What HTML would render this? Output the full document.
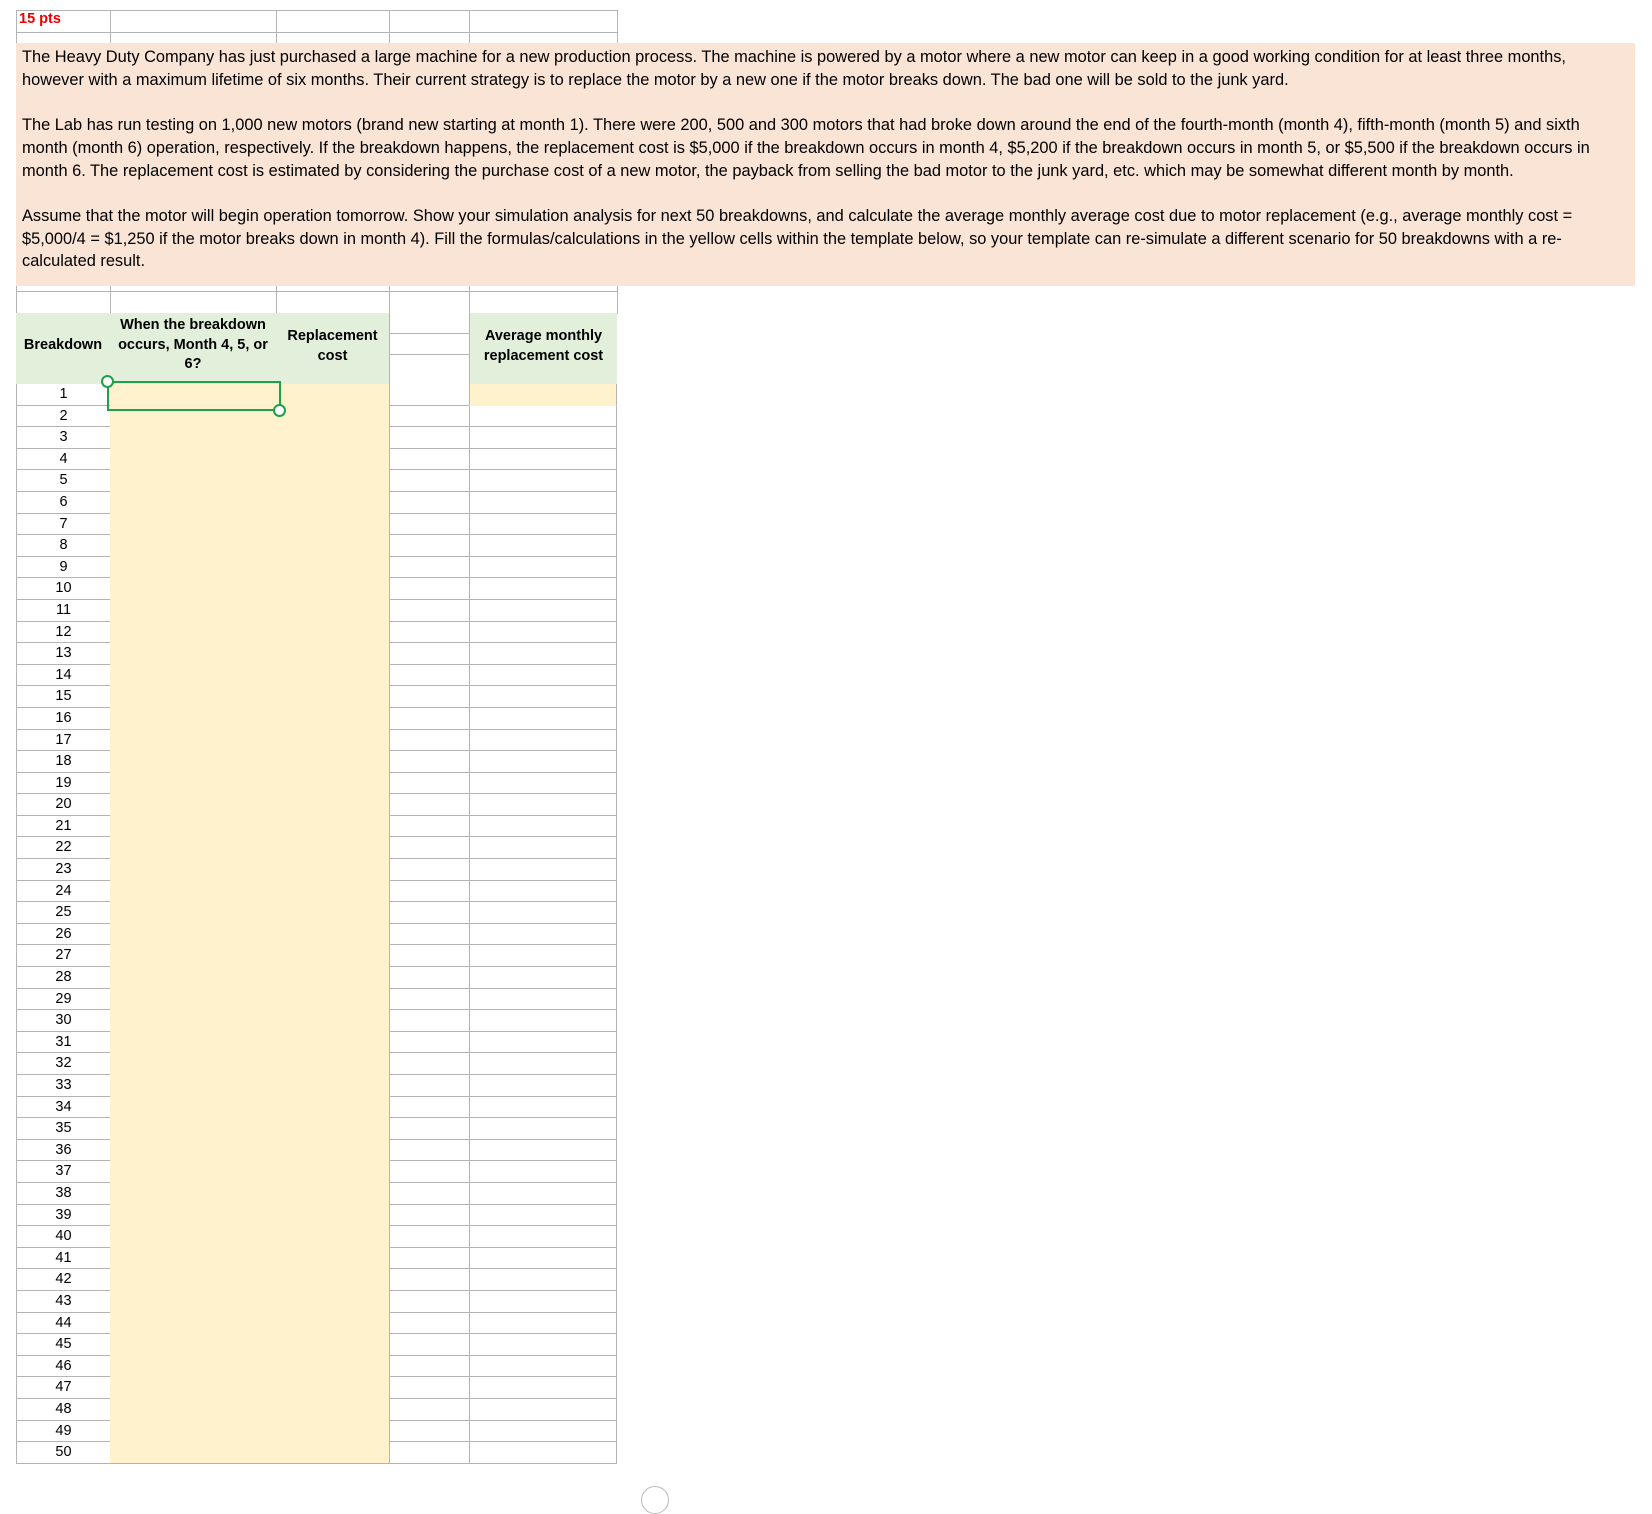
<!DOCTYPE html>
<html><head><meta charset="utf-8"><style>
body{margin:0;width:1652px;height:1494px;background:#fff;position:relative;overflow:hidden;font-family:"Liberation Sans",Arial,sans-serif;color:#000}
.a{position:absolute}
.h{position:absolute;height:1px;background:#b4b4b4}
.v{position:absolute;width:1px;background:#b4b4b4}
.p{position:absolute;left:22px;top:46px;font-size:16.4px;line-height:22.7px;white-space:nowrap}
.hd{position:absolute;font-weight:bold;font-size:14.5px;line-height:19.5px;text-align:center}
#rows{position:absolute;left:16px;top:384px;width:601px}
.r{height:21.6px;position:relative;font-size:14.5px}
.r div{position:absolute;top:0;height:21.6px;box-sizing:border-box}
.c1{left:0;width:94px;border-left:1px solid #b4b4b4;border-bottom:1px solid #b4b4b4;text-align:center;line-height:20px}
.c2{left:94px;width:279px;background:#fff2cc}
.c4{left:373px;width:80px;border-left:1px solid #b4b4b4;border-bottom:1px solid #b4b4b4}
.c5{left:453px;width:148px;border-left:1px solid #b4b4b4;border-right:1px solid #b4b4b4;border-bottom:1px solid #b4b4b4}
</style></head><body>
<div class="h" style="left:16px;top:10px;width:601px"></div>
<div class="h" style="left:16px;top:32px;width:601px"></div>
<div class="v" style="left:16px;top:10px;height:280px"></div>
<div class="v" style="left:110px;top:10px;height:33px"></div>
<div class="v" style="left:276px;top:10px;height:33px"></div>
<div class="v" style="left:389px;top:10px;height:33px"></div>
<div class="v" style="left:469px;top:10px;height:33px"></div>
<div class="v" style="left:617px;top:10px;height:33px"></div>
<div class="a" style="left:19px;top:11px;color:#e00;font-weight:bold;font-size:14.5px">15 pts</div>
<div class="a" style="left:16px;top:43px;width:1619px;height:243px;background:#fae4d6"></div>
<div class="p">The Heavy Duty Company has just purchased a large machine for a new production process. The machine is powered by a motor where a new motor can keep in a good working condition for at least three months,<br>however with a maximum lifetime of six months. Their current strategy is to replace the motor by a new one if the motor breaks down. The bad one will be sold to the junk yard.<br><br>The Lab has run testing on 1,000 new motors (brand new starting at month 1). There were 200, 500 and 300 motors that had broke down around the end of the fourth-month (month 4), fifth-month (month 5) and sixth<br>month (month 6) operation, respectively. If the breakdown happens, the replacement cost is $5,000 if the breakdown occurs in month 4, $5,200 if the breakdown occurs in month 5, or $5,500 if the breakdown occurs in<br>month 6. The replacement cost is estimated by considering the purchase cost of a new motor, the payback from selling the bad motor to the junk yard, etc. which may be somewhat different month by month.<br><br>Assume that the motor will begin operation tomorrow. Show your simulation analysis for next 50 breakdowns, and calculate the average monthly average cost due to motor replacement (e.g., average monthly cost =<br>$5,000/4 = $1,250 if the motor breaks down in month 4). Fill the formulas/calculations in the yellow cells within the template below, so your template can re-simulate a different scenario for 50 breakdowns with a re-<br>calculated result.</div>
<div class="h" style="left:16px;top:291px;width:601px"></div>
<div class="v" style="left:16px;top:286px;height:28px"></div>
<div class="v" style="left:110px;top:286px;height:28px"></div>
<div class="v" style="left:276px;top:286px;height:28px"></div>
<div class="v" style="left:389px;top:286px;height:98px"></div>
<div class="v" style="left:469px;top:286px;height:98px"></div>
<div class="v" style="left:617px;top:286px;height:28px"></div>
<div class="h" style="left:389px;top:333px;width:80px"></div>
<div class="h" style="left:389px;top:354px;width:80px"></div>
<div class="a" style="left:16px;top:313px;width:373px;height:71px;background:#e2efda"></div>
<div class="a" style="left:470px;top:313px;width:147px;height:71px;background:#e2efda"></div>
<div class="hd" style="left:16px;top:336px;width:94px">Breakdown</div>
<div class="hd" style="left:110px;top:316px;width:166px">When the breakdown<br>occurs, Month 4, 5, or<br>6?</div>
<div class="hd" style="left:276px;top:327px;width:113px">Replacement<br>cost</div>
<div class="hd" style="left:470px;top:327px;width:147px">Average monthly<br>replacement cost</div>
<div id="rows">
<div class="r"><div class="c1">1</div><div class="c2"></div><div class="c4"></div><div class="c5" style="background:#fff2cc;border-bottom-color:#fff2cc"></div></div>
<div class="r"><div class="c1">2</div><div class="c2"></div><div class="c4"></div><div class="c5"></div></div>
<div class="r"><div class="c1">3</div><div class="c2"></div><div class="c4"></div><div class="c5"></div></div>
<div class="r"><div class="c1">4</div><div class="c2"></div><div class="c4"></div><div class="c5"></div></div>
<div class="r"><div class="c1">5</div><div class="c2"></div><div class="c4"></div><div class="c5"></div></div>
<div class="r"><div class="c1">6</div><div class="c2"></div><div class="c4"></div><div class="c5"></div></div>
<div class="r"><div class="c1">7</div><div class="c2"></div><div class="c4"></div><div class="c5"></div></div>
<div class="r"><div class="c1">8</div><div class="c2"></div><div class="c4"></div><div class="c5"></div></div>
<div class="r"><div class="c1">9</div><div class="c2"></div><div class="c4"></div><div class="c5"></div></div>
<div class="r"><div class="c1">10</div><div class="c2"></div><div class="c4"></div><div class="c5"></div></div>
<div class="r"><div class="c1">11</div><div class="c2"></div><div class="c4"></div><div class="c5"></div></div>
<div class="r"><div class="c1">12</div><div class="c2"></div><div class="c4"></div><div class="c5"></div></div>
<div class="r"><div class="c1">13</div><div class="c2"></div><div class="c4"></div><div class="c5"></div></div>
<div class="r"><div class="c1">14</div><div class="c2"></div><div class="c4"></div><div class="c5"></div></div>
<div class="r"><div class="c1">15</div><div class="c2"></div><div class="c4"></div><div class="c5"></div></div>
<div class="r"><div class="c1">16</div><div class="c2"></div><div class="c4"></div><div class="c5"></div></div>
<div class="r"><div class="c1">17</div><div class="c2"></div><div class="c4"></div><div class="c5"></div></div>
<div class="r"><div class="c1">18</div><div class="c2"></div><div class="c4"></div><div class="c5"></div></div>
<div class="r"><div class="c1">19</div><div class="c2"></div><div class="c4"></div><div class="c5"></div></div>
<div class="r"><div class="c1">20</div><div class="c2"></div><div class="c4"></div><div class="c5"></div></div>
<div class="r"><div class="c1">21</div><div class="c2"></div><div class="c4"></div><div class="c5"></div></div>
<div class="r"><div class="c1">22</div><div class="c2"></div><div class="c4"></div><div class="c5"></div></div>
<div class="r"><div class="c1">23</div><div class="c2"></div><div class="c4"></div><div class="c5"></div></div>
<div class="r"><div class="c1">24</div><div class="c2"></div><div class="c4"></div><div class="c5"></div></div>
<div class="r"><div class="c1">25</div><div class="c2"></div><div class="c4"></div><div class="c5"></div></div>
<div class="r"><div class="c1">26</div><div class="c2"></div><div class="c4"></div><div class="c5"></div></div>
<div class="r"><div class="c1">27</div><div class="c2"></div><div class="c4"></div><div class="c5"></div></div>
<div class="r"><div class="c1">28</div><div class="c2"></div><div class="c4"></div><div class="c5"></div></div>
<div class="r"><div class="c1">29</div><div class="c2"></div><div class="c4"></div><div class="c5"></div></div>
<div class="r"><div class="c1">30</div><div class="c2"></div><div class="c4"></div><div class="c5"></div></div>
<div class="r"><div class="c1">31</div><div class="c2"></div><div class="c4"></div><div class="c5"></div></div>
<div class="r"><div class="c1">32</div><div class="c2"></div><div class="c4"></div><div class="c5"></div></div>
<div class="r"><div class="c1">33</div><div class="c2"></div><div class="c4"></div><div class="c5"></div></div>
<div class="r"><div class="c1">34</div><div class="c2"></div><div class="c4"></div><div class="c5"></div></div>
<div class="r"><div class="c1">35</div><div class="c2"></div><div class="c4"></div><div class="c5"></div></div>
<div class="r"><div class="c1">36</div><div class="c2"></div><div class="c4"></div><div class="c5"></div></div>
<div class="r"><div class="c1">37</div><div class="c2"></div><div class="c4"></div><div class="c5"></div></div>
<div class="r"><div class="c1">38</div><div class="c2"></div><div class="c4"></div><div class="c5"></div></div>
<div class="r"><div class="c1">39</div><div class="c2"></div><div class="c4"></div><div class="c5"></div></div>
<div class="r"><div class="c1">40</div><div class="c2"></div><div class="c4"></div><div class="c5"></div></div>
<div class="r"><div class="c1">41</div><div class="c2"></div><div class="c4"></div><div class="c5"></div></div>
<div class="r"><div class="c1">42</div><div class="c2"></div><div class="c4"></div><div class="c5"></div></div>
<div class="r"><div class="c1">43</div><div class="c2"></div><div class="c4"></div><div class="c5"></div></div>
<div class="r"><div class="c1">44</div><div class="c2"></div><div class="c4"></div><div class="c5"></div></div>
<div class="r"><div class="c1">45</div><div class="c2"></div><div class="c4"></div><div class="c5"></div></div>
<div class="r"><div class="c1">46</div><div class="c2"></div><div class="c4"></div><div class="c5"></div></div>
<div class="r"><div class="c1">47</div><div class="c2"></div><div class="c4"></div><div class="c5"></div></div>
<div class="r"><div class="c1">48</div><div class="c2"></div><div class="c4"></div><div class="c5"></div></div>
<div class="r"><div class="c1">49</div><div class="c2"></div><div class="c4"></div><div class="c5"></div></div>
<div class="r"><div class="c1">50</div><div class="c2"></div><div class="c4"></div><div class="c5"></div></div>
</div>
<div class="h" style="left:110px;top:1463px;width:280px"></div>
<div class="a" style="left:107px;top:381px;width:170px;height:26px;border:2px solid #1fa14a"></div>
<div class="a" style="left:101px;top:375px;width:9px;height:9px;border:2px solid #1fa14a;border-radius:50%;background:#fff"></div>
<div class="a" style="left:273px;top:404px;width:9px;height:9px;border:2px solid #1fa14a;border-radius:50%;background:#fff"></div>
<div class="a" style="left:641px;top:1486px;width:26px;height:26px;border:1px solid #bbb;border-radius:50%;background:#fff"></div>
</body></html>
